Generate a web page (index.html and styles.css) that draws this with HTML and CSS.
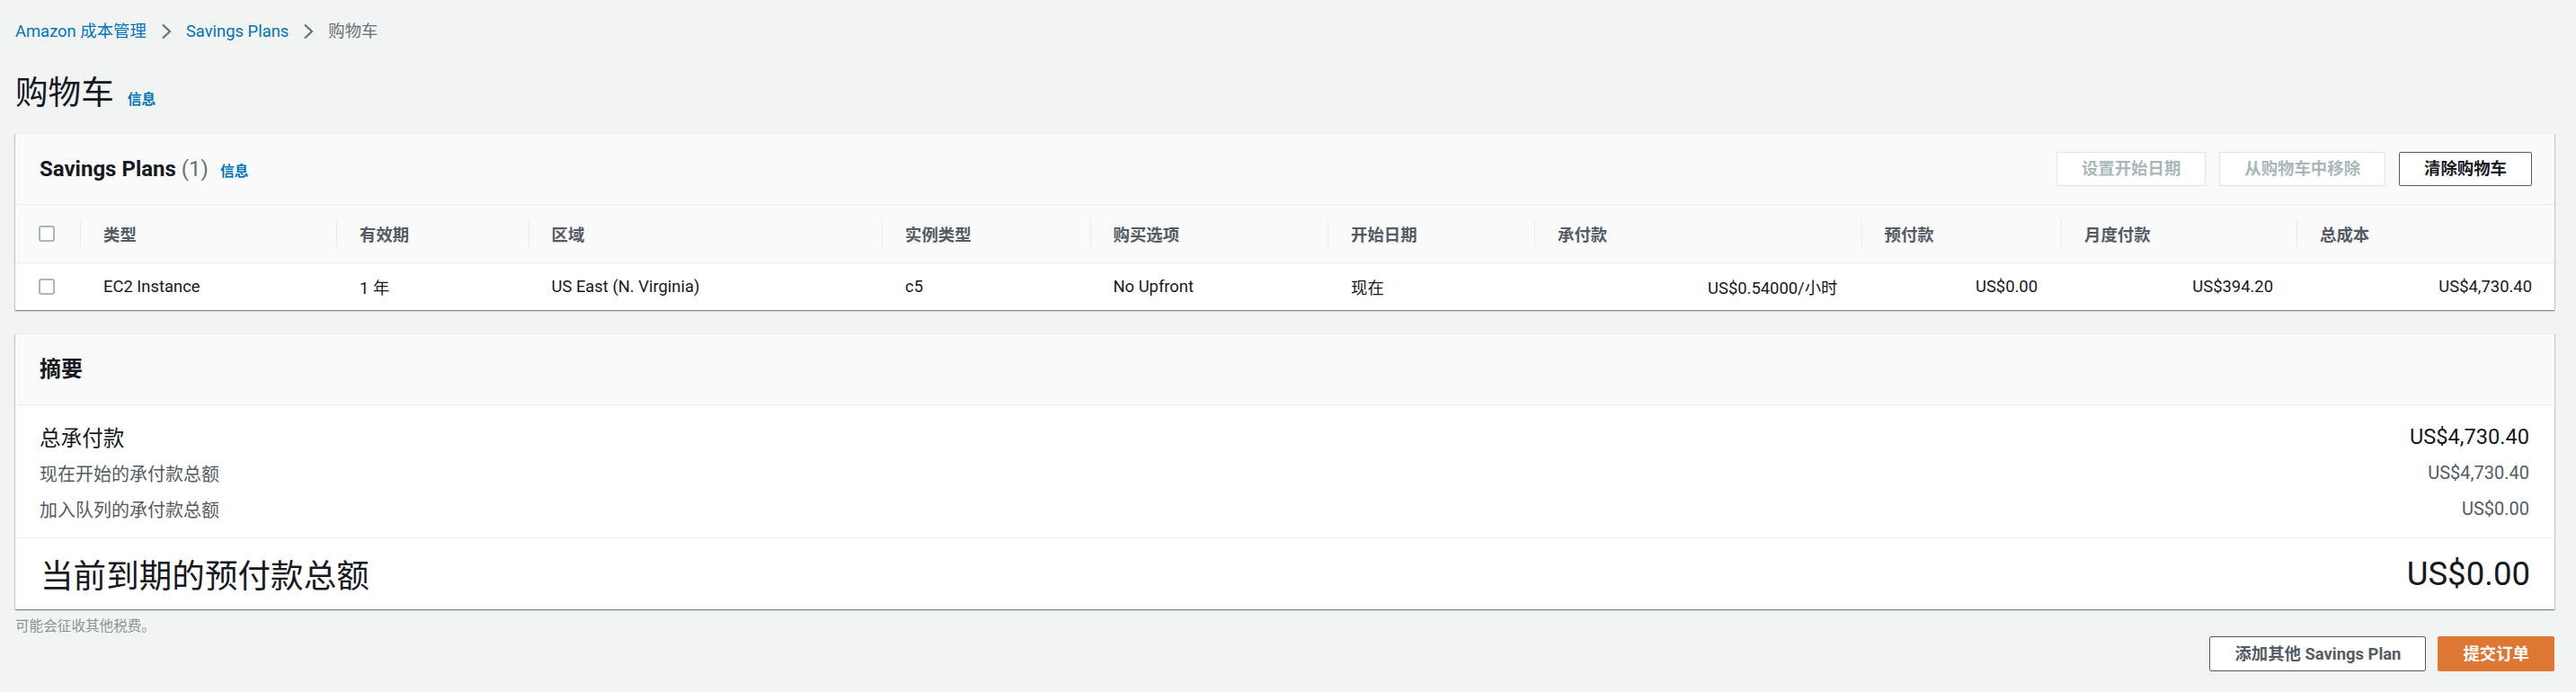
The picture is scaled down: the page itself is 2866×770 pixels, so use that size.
FILE: index.html
```html
<!DOCTYPE html>
<html lang="zh-CN">
<head>
<meta charset="utf-8">
<title>购物车</title>
<link rel="stylesheet" href="styles.css">
</head>
<body>
<div class="page">
  <nav class="crumbs">
    <a class="crumb-link" href="#">Amazon 成本管理</a>
    <svg class="chev" viewBox="0 0 12 18" width="12" height="18"><path d="M2 1.5 L10 9 L2 16.5" fill="none" stroke="#687078" stroke-width="2.2"/></svg>
    <a class="crumb-link" href="#">Savings Plans</a>
    <svg class="chev" viewBox="0 0 12 18" width="12" height="18"><path d="M2 1.5 L10 9 L2 16.5" fill="none" stroke="#687078" stroke-width="2.2"/></svg>
    <span class="crumb-current">购物车</span>
  </nav>

  <div class="page-title">
    <h1>购物车</h1>
    <a class="info" href="#">信息</a>
  </div>

  <section class="card">
    <div class="card-head">
      <div class="head-title">
        <h2>Savings Plans <span class="count">(1)</span></h2>
        <a class="info" href="#">信息</a>
      </div>
      <div class="actions">
        <button class="btn btn-disabled">设置开始日期</button>
        <button class="btn btn-disabled">从购物车中移除</button>
        <button class="btn btn-normal">清除购物车</button>
      </div>
    </div>
    <table class="grid">
      <colgroup>
        <col class="w-chk"><col class="w-type"><col class="w-term"><col class="w-region"><col class="w-inst"><col class="w-opt"><col class="w-start"><col class="w-commit"><col class="w-up"><col class="w-month"><col class="w-total">
      </colgroup>
      <thead>
        <tr>
          <th class="chk-cell"><span class="checkbox"></span></th>
          <th>类型</th>
          <th>有效期</th>
          <th>区域</th>
          <th>实例类型</th>
          <th>购买选项</th>
          <th>开始日期</th>
          <th>承付款</th>
          <th>预付款</th>
          <th>月度付款</th>
          <th>总成本</th>
        </tr>
      </thead>
      <tbody>
        <tr>
          <td class="chk-cell"><span class="checkbox"></span></td>
          <td>EC2 Instance</td>
          <td>1 年</td>
          <td>US East (N. Virginia)</td>
          <td>c5</td>
          <td>No Upfront</td>
          <td>现在</td>
          <td class="num">US$0.54000/小时</td>
          <td class="num">US$0.00</td>
          <td class="num">US$394.20</td>
          <td class="num">US$4,730.40</td>
        </tr>
      </tbody>
    </table>
  </section>

  <section class="card summary">
    <div class="card-head">
      <h2>摘要</h2>
    </div>
    <div class="sum-body">
      <div class="sum-row main">
        <span>总承付款</span><span>US$4,730.40</span>
      </div>
      <div class="sum-row sub">
        <span>现在开始的承付款总额</span><span>US$4,730.40</span>
      </div>
      <div class="sum-row sub">
        <span>加入队列的承付款总额</span><span>US$0.00</span>
      </div>
    </div>
    <div class="sum-total">
      <span>当前到期的预付款总额</span><span>US$0.00</span>
    </div>
  </section>

  <p class="note">可能会征收其他税费。</p>

  <div class="footer-actions">
    <button class="btn btn-normal btn-lg">添加其他 Savings Plan</button>
    <button class="btn btn-primary btn-lg">提交订单</button>
  </div>
</div>
</body>
</html>
```

FILE: styles.css
```css
* { box-sizing: border-box; }

html, body {
  margin: 0;
  padding: 0;
  background: #f2f3f3;
}

body {
  font-family: Roboto, "Noto Sans CJK SC", "Noto Sans", sans-serif;
  color: #16191f;
}

.page {
  padding: 22px 24px 0 17px;
}

/* breadcrumbs */
.crumbs {
  display: flex;
  align-items: center;
  height: 26px;
  font-size: 18.4px;
  line-height: 26px;
  gap: 16px;
}

.crumb-link {
  color: #0073bb;
  text-decoration: none;
}

.crumb-current {
  color: #687078;
}

.chev {
  display: block;
}

/* title */
.page-title {
  display: flex;
  align-items: baseline;
  gap: 15px;
  margin-top: 33px;
  height: 46px;
}

.page-title h1 {
  margin: 0;
  font-size: 36.6px;
  font-weight: 400;
  line-height: 46px;
  color: #16191f;
}

.info {
  color: #0073bb;
  font-size: 15.8px;
  font-weight: 700;
  text-decoration: none;
}

/* cards */
.card {
  background: #ffffff;
  margin-top: 21px;
  border-top: 1px solid #eaeded;
  box-shadow: 0 1px 1px 0 rgba(0, 28, 36, 0.3), 1px 1px 1px 0 rgba(0, 28, 36, 0.15), -1px 1px 1px 0 rgba(0, 28, 36, 0.15);
}

.card.summary {
  margin-top: 26px;
}

.card-head {
  display: flex;
  align-items: center;
  justify-content: space-between;
  height: 79px;
  padding: 0 25px 0 27px;
  background: #fafafa;
  border-bottom: 1px solid #eaeded;
}

.card-head h2 {
  margin: 0;
  font-size: 24px;
  font-weight: 700;
  line-height: 30px;
  color: #16191f;
}

.head-title {
  display: flex;
  align-items: baseline;
  gap: 13px;
}

.count {
  font-weight: 400;
  color: #687078;
}

.actions {
  display: flex;
  gap: 15px;
}

/* buttons */
.btn {
  height: 38px;
  padding: 0 27px;
  border-radius: 2px;
  font-family: Roboto, "Noto Sans CJK SC", "Noto Sans", sans-serif;
  font-size: 18.4px;
  font-weight: 700;
  line-height: 36px;
  background: #ffffff;
  cursor: pointer;
}

.btn-disabled {
  border: 1px solid #e1e4e6;
  color: #aab7b8;
}

.btn-normal {
  border: 1px solid #545b64;
  color: #545b64;
}

.actions .btn-normal {
  color: #16191f;
}

.btn-lg {
  height: 39px;
  line-height: 37px;
}

.btn-primary {
  border: 1px solid #dd7733;
  background: #dd7733;
  color: #ffffff;
}

/* table */
.grid {
  width: 100%;
  border-collapse: collapse;
  table-layout: fixed;
  font-size: 18.4px;
}

.w-chk { width: 72px; }
.w-type { width: 285px; }
.w-term { width: 213.5px; }
.w-region { width: 393.5px; }
.w-inst { width: 231.5px; }
.w-opt { width: 264.5px; }
.w-start { width: 230px; }
.w-commit { width: 363.5px; }
.w-up { width: 222.5px; }
.w-month { width: 262px; }
.w-total { width: 287px; }

.grid th {
  position: relative;
  height: 64px;
  padding: 0 26px;
  background: #fafafa;
  border-bottom: 1px solid #eaeded;
  text-align: left;
  font-weight: 700;
  color: #545b64;
  white-space: nowrap;
}

.grid th + th::before {
  content: "";
  position: absolute;
  left: 0;
  top: 17px;
  bottom: 16px;
  width: 1px;
  background: #eaeded;
}

.grid td {
  height: 53px;
  padding: 0 26px;
  color: #16191f;
  white-space: nowrap;
}

.grid td.num {
  text-align: right;
}

.grid td.num:last-child {
  padding-right: 25px;
}

.grid .chk-cell {
  padding: 0 0 0 26px;
}

.checkbox {
  display: block;
  width: 18px;
  height: 18px;
  border: 2px solid #aab7b8;
  border-radius: 3px;
  background: #ffffff;
}

/* summary */
.sum-body {
  padding: 15px 28px 12px 27px;
  border-bottom: 1px solid #eaeded;
}

.sum-row {
  display: flex;
  justify-content: space-between;
  align-items: center;
  height: 40px;
}

.sum-row.main {
  font-size: 23.6px;
  color: #16191f;
}

.sum-row.sub {
  font-size: 20px;
  color: #545b64;
}

.sum-total {
  display: flex;
  justify-content: space-between;
  align-items: center;
  height: 79px;
  padding: 0 27px 0 28px;
  font-size: 36.6px;
  color: #16191f;
}

.note {
  margin: 9px 0 0 0;
  font-size: 15.6px;
  line-height: 20px;
  color: #879596;
}

.footer-actions {
  display: flex;
  justify-content: flex-end;
  gap: 13px;
  margin-top: 1px;
}
```
